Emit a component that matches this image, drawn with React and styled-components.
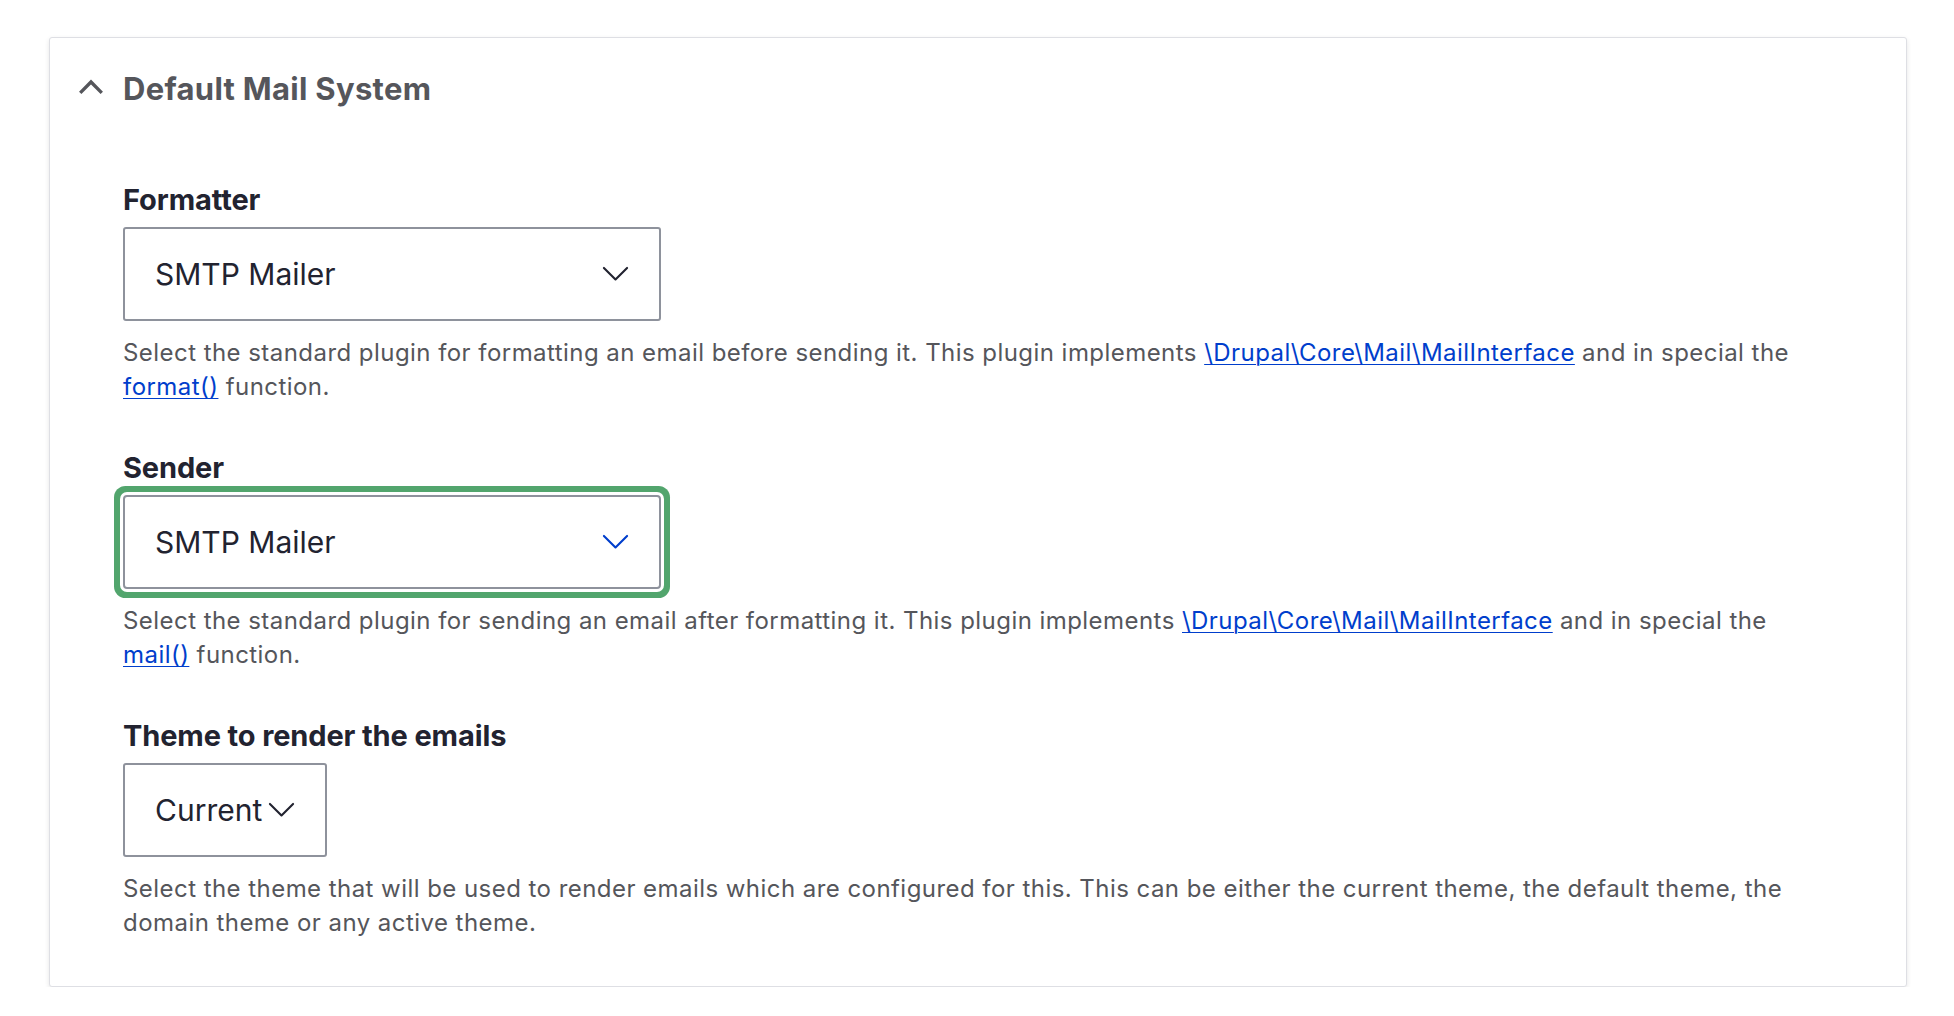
import styled, { createGlobalStyle } from "styled-components";

const GlobalStyle = createGlobalStyle`
  html, body {
    margin: 0;
    padding: 0;
    background: #fff;
  }
  body {
    font-family: Inter, "Noto Sans", "Liberation Sans", sans-serif;
    color: #222330;
    -webkit-font-smoothing: antialiased;
  }
`;

const Page = styled.div`
  padding: 37px 47px 0 49px;
`;

const Details = styled.section`
  border: 1px solid #dedfe4;
  border-radius: 3px;
  box-shadow: 0 2px 5px rgba(0, 0, 0, 0.1);
  background: #fff;
  padding: 0 73px 46px 73px;
`;

const Summary = styled.div`
  position: relative;
  display: flex;
  align-items: center;
  height: 100px;
  margin-bottom: 45px;
  color: #55565b;
  font-size: 31px;
  font-weight: 700;
  letter-spacing: 0.3px;

  svg {
    position: absolute;
    left: -45px;
    top: 41px;
  }
`;

const FormItem = styled.div`
  & + & {
    margin-top: 47px;
  }
`;

const Label = styled.div`
  font-size: 29px;
  font-weight: 700;
  line-height: 34px;
  letter-spacing: -0.12px;
  color: #222330;
  margin-bottom: 10px;
`;

const Select = styled.div`
  display: ${(p) => (p.$auto ? "inline-flex" : "flex")};
  align-items: center;
  justify-content: space-between;
  gap: 6px;
  width: ${(p) => (p.$auto ? "auto" : "538px")};
  box-sizing: border-box;
  height: 94px;
  padding: 0 30px 0 30px;
  border: 2px solid #8e929c;
  border-radius: ${(p) => (p.$focused ? "4px" : "3px")};
  background: #fff;
  font-size: 30px;
  color: #222330;
  box-shadow: ${(p) =>
    p.$focused ? "0 0 0 3px #fff, 0 0 0 9px #52a56d" : "none"};
`;

const Description = styled.div`
  margin-top: 15px;
  font-size: 24px;
  line-height: 34px;
  letter-spacing: 0.45px;
  color: #55565b;

  a {
    color: #003ecc;
    text-decoration: underline;
    text-decoration-thickness: 1px;
    text-underline-offset: 3px;
  }
`;

function ChevronDown({ color }) {
  return (
    <svg width="27" height="16" viewBox="0 0 14 8.3" fill="none">
      <path
        d="M1 1L7 7L13 1"
        stroke={color}
        strokeWidth="1.1"
        strokeLinecap="round"
        strokeLinejoin="round"
      />
    </svg>
  );
}

function ChevronUp() {
  return (
    <svg width="26" height="16" viewBox="0 0 14 8.6" fill="none">
      <path
        d="M1.2 7.5L7 1.6L12.8 7.5"
        stroke="#55565b"
        strokeWidth="1.8"
      />
    </svg>
  );
}

export default function App() {
  return (
    <>
      <GlobalStyle />
      <Page>
        <Details>
          <Summary>
            <ChevronUp />
            Default Mail System
          </Summary>

          <FormItem>
            <Label>Formatter</Label>
            <Select>
              <span>SMTP Mailer</span>
              <ChevronDown color="#222330" />
            </Select>
            <Description>
              Select the standard plugin for formatting an email before sending
              it. This plugin implements{" "}
              <a href="#">\Drupal\Core\Mail\MailInterface</a> and in special
              the <a href="#">format()</a> function.
            </Description>
          </FormItem>

          <FormItem>
            <Label>Sender</Label>
            <Select $focused>
              <span>SMTP Mailer</span>
              <ChevronDown color="#003ecc" />
            </Select>
            <Description>
              Select the standard plugin for sending an email after formatting
              it. This plugin implements{" "}
              <a href="#">\Drupal\Core\Mail\MailInterface</a> and in special
              the <a href="#">mail()</a> function.
            </Description>
          </FormItem>

          <FormItem>
            <Label>Theme to render the emails</Label>
            <Select $auto>
              <span>Current</span>
              <ChevronDown color="#222330" />
            </Select>
            <Description>
              Select the theme that will be used to render emails which are
              configured for this. This can be either the current theme, the
              default theme, the domain theme or any active theme.
            </Description>
          </FormItem>
        </Details>
      </Page>
    </>
  );
}
